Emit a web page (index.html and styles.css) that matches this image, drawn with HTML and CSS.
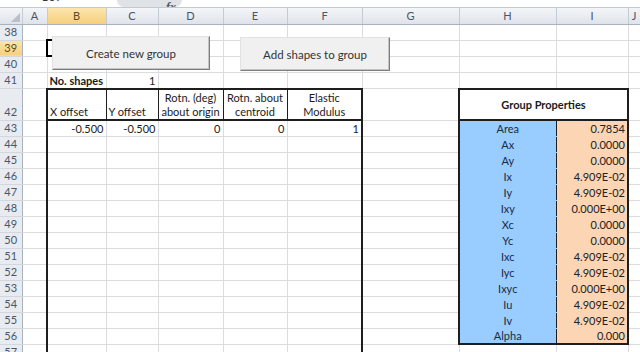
FILE: index.html
```html
<!DOCTYPE html>
<html>
<head>
  <title>Group Properties</title>
  <link rel="stylesheet" href="styles.css">
</head>
<body>
  <div class="formula-bar">
    <div class="name-box">B39</div>
    <div class="fx-box"><span class="fx">fx</span></div>
    <div class="formula-input"></div>
  </div>

  <div class="sheet">
    <table class="grid">
      <colgroup>
        <col class="w-head">
        <col class="w-a">
        <col class="w-b">
        <col class="w-c">
        <col class="w-d">
        <col class="w-e">
        <col class="w-f">
        <col class="w-g">
        <col class="w-h">
        <col class="w-i">
        <col class="w-j">
      </colgroup>

      <tr class="col-heads">
        <th class="corner"><span class="corner-mark"></span></th>
        <th>A</th><th class="sel">B</th><th>C</th><th>D</th><th>E</th>
        <th>F</th><th>G</th><th>H</th><th>I</th><th>J</th>
      </tr>

      <tr class="r-top">
        <th class="row-head">38</th>
        <td></td><td></td><td></td><td></td><td></td><td></td><td></td><td></td><td></td><td></td>
      </tr>
      <tr class="r-top">
        <th class="row-head sel">39</th>
        <td></td><td class="selected"></td><td></td><td></td><td></td><td></td><td></td><td></td><td></td><td></td>
      </tr>
      <tr class="r-top">
        <th class="row-head">40</th>
        <td></td><td></td><td></td><td></td><td></td><td></td><td></td><td></td><td></td><td></td>
      </tr>
      <tr class="r-top">
        <th class="row-head">41</th>
        <td></td><td class="bold">No. shapes</td><td class="num">1</td><td></td><td></td><td></td><td></td><td></td><td></td><td></td>
      </tr>

      <!-- header row of the shapes table and the properties box -->
      <tr class="r-tall">
        <th class="row-head">42</th>
        <td></td>
        <td class="bx-l bx-t bx-b dk-r">X offset</td>
        <td class="bx-t bx-b dk-r">Y offset</td>
        <td class="bx-t bx-b dk-r center">Rotn. (deg)<br>about origin</td>
        <td class="bx-t bx-b dk-r center">Rotn. about<br>centroid</td>
        <td class="bx-t bx-b bx-r center">Elastic<br>Modulus</td>
        <td></td>
        <td class="bx-l bx-t bx-b bx-r box-title" colspan="2">Group Properties</td>
        <td></td>
      </tr>

      <tr>
        <th class="row-head">43</th>
        <td></td>
        <td class="bx-l num">-0.500</td><td class="num">-0.500</td><td class="num">0</td><td class="num">0</td><td class="bx-r num">1</td>
        <td></td>
        <td class="bx-l dk-r prop">Area</td><td class="bx-r val">0.7854</td>
        <td></td>
      </tr>
      <tr>
        <th class="row-head">44</th>
        <td></td><td class="bx-l"></td><td></td><td></td><td></td><td class="bx-r"></td><td></td>
        <td class="bx-l dk-r prop">Ax</td><td class="bx-r val">0.0000</td><td></td>
      </tr>
      <tr>
        <th class="row-head">45</th>
        <td></td><td class="bx-l"></td><td></td><td></td><td></td><td class="bx-r"></td><td></td>
        <td class="bx-l dk-r prop">Ay</td><td class="bx-r val">0.0000</td><td></td>
      </tr>
      <tr>
        <th class="row-head">46</th>
        <td></td><td class="bx-l"></td><td></td><td></td><td></td><td class="bx-r"></td><td></td>
        <td class="bx-l dk-r prop">Ix</td><td class="bx-r val">4.909E-02</td><td></td>
      </tr>
      <tr>
        <th class="row-head">47</th>
        <td></td><td class="bx-l"></td><td></td><td></td><td></td><td class="bx-r"></td><td></td>
        <td class="bx-l dk-r prop">Iy</td><td class="bx-r val">4.909E-02</td><td></td>
      </tr>
      <tr>
        <th class="row-head">48</th>
        <td></td><td class="bx-l"></td><td></td><td></td><td></td><td class="bx-r"></td><td></td>
        <td class="bx-l dk-r prop">Ixy</td><td class="bx-r val">0.000E+00</td><td></td>
      </tr>
      <tr>
        <th class="row-head">49</th>
        <td></td><td class="bx-l"></td><td></td><td></td><td></td><td class="bx-r"></td><td></td>
        <td class="bx-l dk-r prop">Xc</td><td class="bx-r val">0.0000</td><td></td>
      </tr>
      <tr>
        <th class="row-head">50</th>
        <td></td><td class="bx-l"></td><td></td><td></td><td></td><td class="bx-r"></td><td></td>
        <td class="bx-l dk-r prop">Yc</td><td class="bx-r val">0.0000</td><td></td>
      </tr>
      <tr>
        <th class="row-head">51</th>
        <td></td><td class="bx-l"></td><td></td><td></td><td></td><td class="bx-r"></td><td></td>
        <td class="bx-l dk-r prop">Ixc</td><td class="bx-r val">4.909E-02</td><td></td>
      </tr>
      <tr>
        <th class="row-head">52</th>
        <td></td><td class="bx-l"></td><td></td><td></td><td></td><td class="bx-r"></td><td></td>
        <td class="bx-l dk-r prop">Iyc</td><td class="bx-r val">4.909E-02</td><td></td>
      </tr>
      <tr>
        <th class="row-head">53</th>
        <td></td><td class="bx-l"></td><td></td><td></td><td></td><td class="bx-r"></td><td></td>
        <td class="bx-l dk-r prop">Ixyc</td><td class="bx-r val">0.000E+00</td><td></td>
      </tr>
      <tr>
        <th class="row-head">54</th>
        <td></td><td class="bx-l"></td><td></td><td></td><td></td><td class="bx-r"></td><td></td>
        <td class="bx-l dk-r prop">Iu</td><td class="bx-r val">4.909E-02</td><td></td>
      </tr>
      <tr>
        <th class="row-head">55</th>
        <td></td><td class="bx-l"></td><td></td><td></td><td></td><td class="bx-r"></td><td></td>
        <td class="bx-l dk-r prop">Iv</td><td class="bx-r val">4.909E-02</td><td></td>
      </tr>
      <tr>
        <th class="row-head">56</th>
        <td></td><td class="bx-l"></td><td></td><td></td><td></td><td class="bx-r"></td><td></td>
        <td class="bx-l bx-b dk-r prop">Alpha</td><td class="bx-r bx-b val">0.000</td><td></td>
      </tr>
      <tr>
        <th class="row-head">57</th>
        <td></td><td class="bx-l"></td><td></td><td></td><td></td><td class="bx-r"></td><td></td>
        <td></td><td></td><td></td>
      </tr>
    </table>

    <button class="sheet-btn btn-create">Create new group</button>
    <button class="sheet-btn btn-add">Add shapes to group</button>
  </div>
</body>
</html>
```

FILE: styles.css
```css
body {
  margin: 0;
  font-family: Lato, "Liberation Sans", sans-serif;
  font-size: 11px;
  color: #1b1b1b;
  background-color: #fff;
  overflow: hidden;
}

/* strip of the formula bar left at the top edge */
.formula-bar {
  display: flex;
  height: 7px;
  overflow: hidden;
  border-bottom: 1px solid #c3c9d1;
}

.name-box {
  width: 117px;
  padding-left: 42px;
  box-sizing: border-box;
  margin-top: -9px;
  line-height: 12px;
  color: #333;
}

.fx-box {
  width: 65px;
  background-color: #dfe3e8;
  border-radius: 0 0 9px 9px;
  text-align: right;
}

.fx {
  display: inline-block;
  margin-top: -9px;
  margin-right: 6px;
  font-family: "Liberation Serif", serif;
  font-style: italic;
  font-weight: bold;
  font-size: 12px;
  color: #555;
}

.formula-input {
  flex-grow: 1;
}

.sheet {
  position: relative;
}

.grid {
  table-layout: fixed;
  border-collapse: collapse;
  width: 640px;
}

.w-head { width: 22px; }
.w-a { width: 25px; }
.w-b { width: 59px; }
.w-c { width: 52px; }
.w-d { width: 65px; }
.w-e { width: 64px; }
.w-f { width: 75px; }
.w-g { width: 97px; }
.w-h { width: 97px; }
.w-i { width: 72px; }
.w-j { width: 12px; }

th,
td {
  padding: 0 2px;
  white-space: nowrap;
  overflow: hidden;
  line-height: 14px;
}

td {
  border-right: 1px solid #dadcdf;
  border-bottom: 1px solid #dadcdf;
  vertical-align: bottom;
}

tr { height: 15.7px; }
.col-heads { height: 16px; }
.r-top { height: 16.2px; }
.r-tall { height: 31.5px; }

/* column and row headings */
.col-heads th {
  font-weight: normal;
  color: #4a5568;
  background: linear-gradient(#f3f5f8, #dfe3e9);
  border-right: 1px solid #c5cbd3;
  border-bottom: 1px solid #a9b3c0;
  text-align: center;
  vertical-align: middle;
}

.col-heads th.sel {
  background: linear-gradient(#fbe5ae, #f6cf7b);
  color: #5a4a2a;
}

.corner {
  position: relative;
}

.corner-mark {
  position: absolute;
  right: 2px;
  bottom: 2px;
  border-left: 9px solid transparent;
  border-bottom: 9px solid #b9c0c9;
}

.row-head {
  font-weight: normal;
  color: #4a5568;
  background-color: #e8ebf0;
  border-right: 1px solid #a9b3c0;
  border-bottom: 1px solid #d2d7de;
  text-align: center;
  vertical-align: bottom;
  padding: 0 0 1px;
}

.row-head.sel {
  background: linear-gradient(#fbe5ae, #f6cf7b);
  color: #5a4a2a;
}

.selected {
  outline: 2px solid #000;
  outline-offset: -1px;
}

/* cell content */
.bold { font-weight: bold; }
.num { text-align: right; }
.center { text-align: center; }

.box-title {
  font-weight: bold;
  text-align: center;
  vertical-align: middle;
  background-color: #fff;
}

/* filled cells hide the grid lines */
td.prop {
  background-color: #99ccff;
  border-bottom-color: #99ccff;
  color: #1d2a45;
  text-align: center;
}

td.val {
  background-color: #fcd5b4;
  border-bottom-color: #fcd5b4;
  color: #222;
  text-align: right;
}

/* thick outline of the two tables */
td.bx-l { border-left: 2px solid #1e1e1e; }
td.bx-r { border-right: 2px solid #1e1e1e; }
td.bx-t { border-top: 2px solid #1e1e1e; }
td.bx-b { border-bottom: 2px solid #1e1e1e; }
td.dk-r { border-right: 1px solid #1e1e1e; }

/* form buttons floating over the grid */
.sheet-btn {
  position: absolute;
  height: 34px;
  padding: 0;
  font-family: Lato, "Liberation Sans", sans-serif;
  font-size: 11.5px;
  color: #333;
  background-color: #f0f0f0;
  border: 1px solid;
  border-color: #e2e2e2 #7d7d7d #7d7d7d #e2e2e2;
  box-shadow: inset -1px -1px 0 #c4c4c4;
}

.btn-create {
  left: 52px;
  top: 28px;
  width: 158px;
}

.btn-add {
  left: 240px;
  top: 29px;
  width: 150px;
}
```
